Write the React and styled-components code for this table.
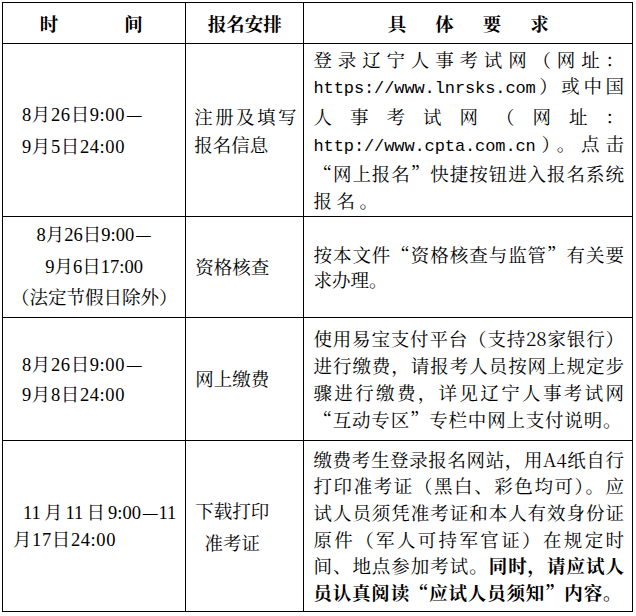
import React from "react";
import styled, { createGlobalStyle } from "styled-components";

const Global = createGlobalStyle`
  html, body { margin: 0; padding: 0; background: #fff; }
  body {
    font-family: "Liberation Serif", "Noto Serif CJK SC", "Noto Sans CJK SC", serif;
    color: #000;
  }
`;

const Table = styled.table`
  border-collapse: separate;
  border-spacing: 0;
  table-layout: fixed;
  width: 631px;
  margin: 2px 0 0 2px;
  border-top: 1.5px solid #000;
  border-left: 1.5px solid #000;
`;

const Col = styled.col`
  width: ${(p) => p.$w}px;
`;

const Row = styled.tr`
  height: ${(p) => p.$h}px;
`;

const Cell = styled.td`
  border-right: 1.5px solid #000;
  border-bottom: 1.5px solid #000;
  padding: ${(p) => p.$pad || "0 8px"};
  vertical-align: middle;
  text-align: ${(p) => p.$align || "left"};
  font-size: 18.5px;
  line-height: ${(p) => p.$lh || 27}px;
  font-family: ${(p) =>
    p.$cjk
      ? `"Noto Serif CJK SC", "Noto Sans CJK SC", "Liberation Serif", serif`
      : `"Liberation Serif", "Noto Serif CJK SC", "Noto Sans CJK SC", serif`};
`;

const HeadCell = styled.th`
  border-right: 1.5px solid #000;
  border-bottom: 1.5px solid #000;
  padding: 0;
  vertical-align: middle;
  font-size: 18.5px;
  font-weight: 700;
  font-family: "Noto Serif CJK SC", "Noto Sans CJK SC", serif;
  line-height: 24px;
`;

const Spread = styled.div`
  display: flex;
  justify-content: center;
  gap: ${(p) => p.$gap || 0}px;
  padding-right: ${(p) => p.$shift || 0}px;
`;

const Line = styled.span`
  display: block;
  text-align: ${(p) => (p.$j ? "justify" : p.$c ? "center" : "left")};
  text-align-last: ${(p) => (p.$j ? "justify" : p.$c ? "center" : "auto")};
  text-indent: ${(p) => p.$indent || 0}px;
  letter-spacing: ${(p) => p.$ls || 0}px;
`;

const Dash = styled.span`
  font-family: "Noto Serif CJK SC", "Noto Sans CJK SC", serif;
  margin-left: 1px;
`;

const Centered = styled.div`
  display: inline-block;
  text-align: center;
`;

const Url = styled.span`
  font-family: "Liberation Mono", monospace;
  font-size: 17px;
  letter-spacing: -0.1px;
`;

const Bold = styled.b`
  font-weight: 700;
`;

export default function App() {
  return (
    <>
      <Global />
      <Table>
        <colgroup>
          <Col $w={183} />
          <Col $w={118} />
          <Col $w={328} />
        </colgroup>
        <thead>
          <Row $h={41}>
            <HeadCell>
              <Spread $gap={66} $shift={6}>
                <span>时</span>
                <span>间</span>
              </Spread>
            </HeadCell>
            <HeadCell>报名安排</HeadCell>
            <HeadCell>
              <Spread $gap={29}>
                <span>具</span>
                <span>体</span>
                <span>要</span>
                <span>求</span>
              </Spread>
            </HeadCell>
          </Row>
        </thead>
        <tbody>
          <Row $h={172.5}>
            <Cell $pad="0 8px 0 19px" $lh={32}>
              <Line $ls={0.6}>
                8月26日9:00<Dash>—</Dash>
              </Line>
              <Line $ls={0.6}>9月5日24:00</Line>
            </Cell>
            <Cell $cjk $lh={28} $pad="0 7px 0 8px">
              <Line $j>注册及填写</Line>
              <Line>报名信息</Line>
            </Cell>
            <Cell $cjk $lh={26.7} $pad="0 8px 0 9px">
              <Line $j>登录辽宁人事考试网（网址：</Line>
              <Line $j>
                <Url>https://www.lnrsks.com</Url>）或中国
              </Line>
              <Line $j>人事考试网（网址：</Line>
              <Line $j>
                <Url>http://www.cpta.com.cn</Url>）。点击
              </Line>
              <Line $j>“网上报名”快捷按钮进入报名系统</Line>
              <Line $ls={4.5}>报名。</Line>
            </Cell>
          </Row>
          <Row $h={101}>
            <Cell $align="center" $lh={31.5} $pad="0 4px">
              <Line $c>
                8月26日9:00<Dash>—</Dash>
              </Line>
              <Line $c>9月6日17:00</Line>
              <Line $c>（法定节假日除外）</Line>
            </Cell>
            <Cell $cjk $pad="0 8px 0 9px">资格核查</Cell>
            <Cell $cjk $lh={25} $pad="0 8px 0 9px">
              <Line $j>按本文件“资格核查与监管”有关要</Line>
              <Line>求办理。</Line>
            </Cell>
          </Row>
          <Row $h={123}>
            <Cell $pad="0 8px 0 19px" $lh={30}>
              <Line $ls={0.6}>
                8月26日9:00<Dash>—</Dash>
              </Line>
              <Line $ls={0.6}>9月8日24:00</Line>
            </Cell>
            <Cell $cjk $pad="0 8px 0 9px">网上缴费</Cell>
            <Cell $cjk $lh={27} $pad="0 8px 0 9px">
              <Line $j>使用易宝支付平台（支持28家银行）</Line>
              <Line $j>进行缴费，请报考人员按网上规定步</Line>
              <Line $j>骤进行缴费，详见辽宁人事考试网</Line>
              <Line $ls={0.8}>“互动专区”专栏中网上支付说明。</Line>
            </Cell>
          </Row>
          <Row $h={171}>
            <Cell $pad="0 9px 0 10px" $lh={27}>
              <Line $j $indent={10}>
                11月11日9:00<Dash>—</Dash>11
              </Line>
              <Line $ls={0.6}>月17日24:00</Line>
            </Cell>
            <Cell $cjk $lh={32} $pad="0 8px 0 9px">
              <Centered>
                下载打印
                <br />
                准考证
              </Centered>
            </Cell>
            <Cell $cjk $lh={26.6} $pad="0 8px 0 9px">
              <Line $j>缴费考生登录报名网站，用A4纸自行</Line>
              <Line $j>打印准考证（黑白、彩色均可）。应</Line>
              <Line $j>试人员须凭准考证和本人有效身份证</Line>
              <Line $j>原件（军人可持军官证）在规定时</Line>
              <Line $j>
                间、地点参加考试。<Bold>同时，请应试人</Bold>
              </Line>
              <Line $ls={0.8}>
                <Bold>员认真阅读“应试人员须知”内容。</Bold>
              </Line>
            </Cell>
          </Row>
        </tbody>
      </Table>
    </>
  );
}
